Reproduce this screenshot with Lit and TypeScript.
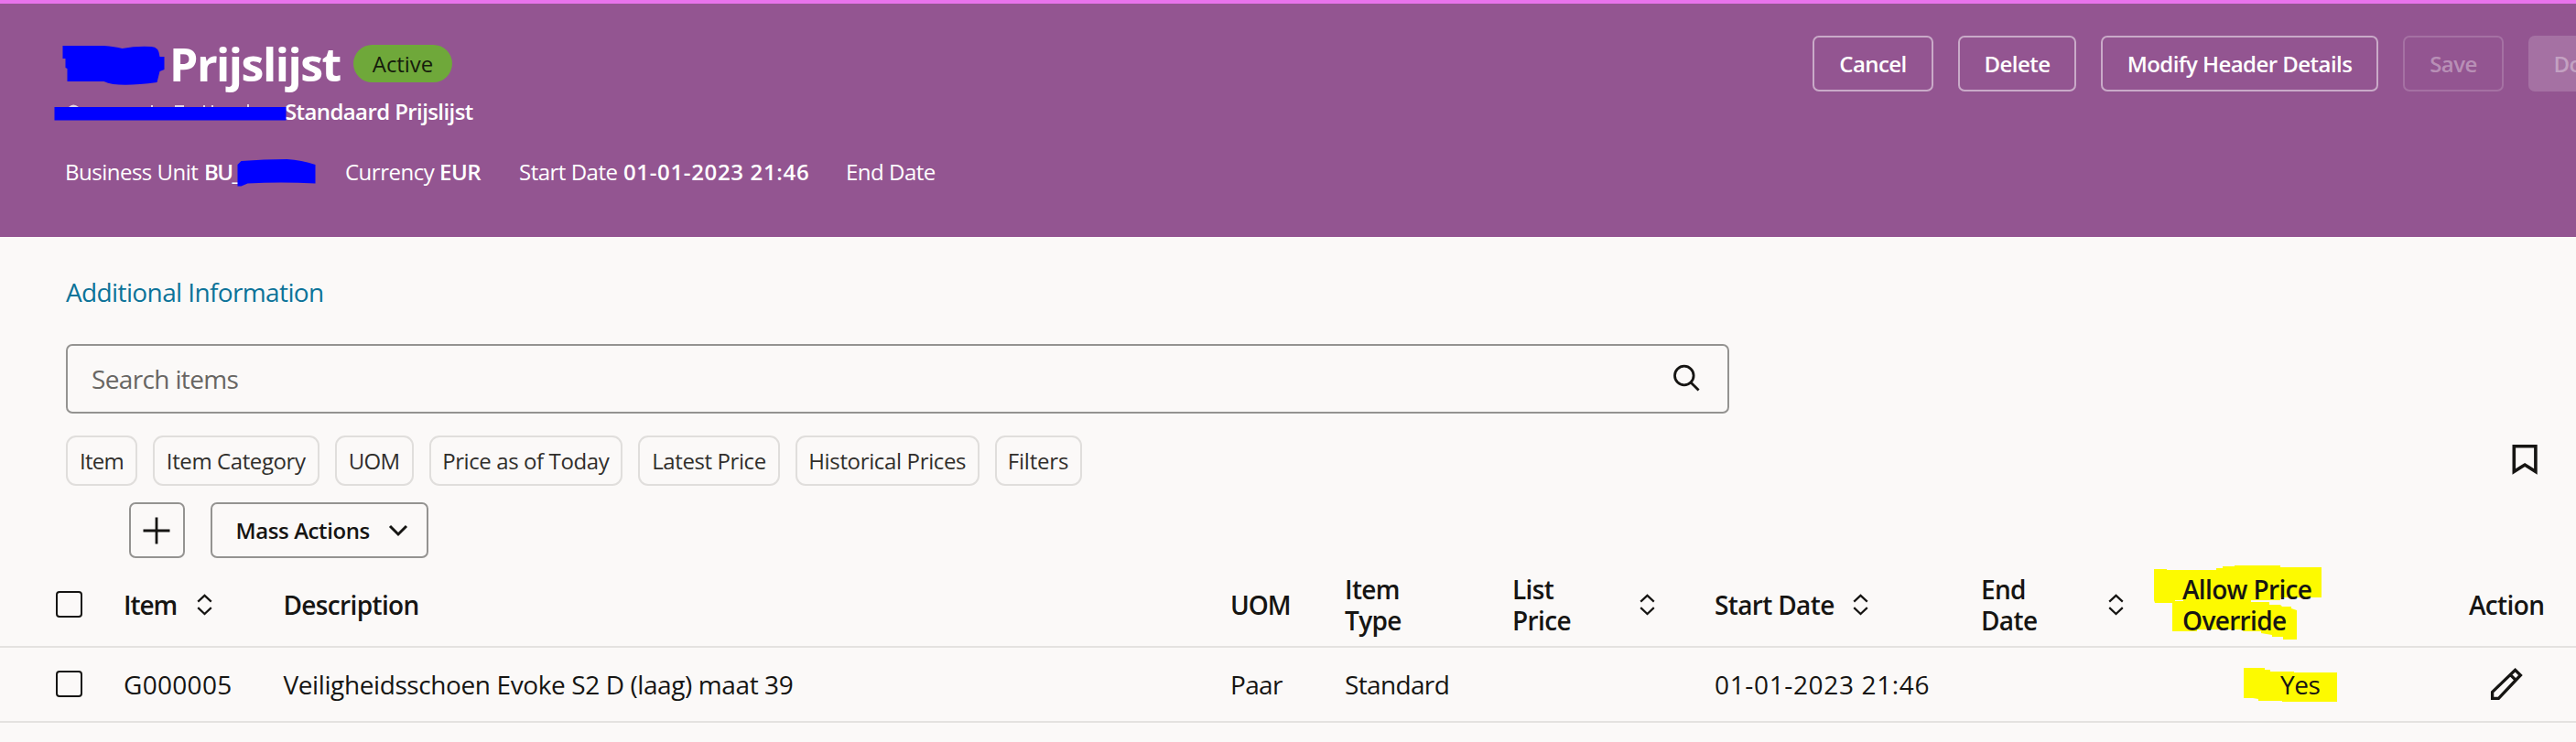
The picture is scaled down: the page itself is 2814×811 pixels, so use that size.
import { LitElement, html, css, svg } from "lit";
import { customElement } from "lit/decorators.js";

const chips: [string, string][] = [
  ["Item", "c1"],
  ["Item Category", "c2"],
  ["UOM", "c3"],
  ["Price as of Today", "c4"],
  ["Latest Price", "c5"],
  ["Historical Prices", "c6"],
  ["Filters", "c7"],
];

const sortIcon = html`<svg class="sort" width="20" height="24" viewBox="0 0 20 24">
  ${svg`<path d="M2 8.5 10 1.2 18 8.5M2 15.5 10 22.8 18 15.5" transform="translate(.4 .8) scale(.91 .93)" fill="none" stroke="#161513" stroke-width="2.5"/>`}
</svg>`;

@customElement("app-root")
export class AppRoot extends LitElement {
  static styles = css`
    :host {
      display: block;
      position: relative;
      width: 100%;
      height: 811px;
      overflow: hidden;
      background: #fbf9f8;
      color: #161513;
      font-family: "Open Sans", "Noto Sans", sans-serif;
      font-size: 28px;
      letter-spacing: -0.5px;
      white-space: nowrap;
    }
    * { box-sizing: border-box; }
    svg { display: block; flex: none; }
    .marks { position: absolute; left: 0; top: 0; pointer-events: none; }
    .page { position: relative; }

    header {
      height: 259px;
      border-top: 4px solid #e873ec;
      background: #935591;
      color: #fff;
      padding: 35px 0 0 71px;
      font-size: 24px;
      letter-spacing: -0.5px;
      overflow: hidden;
    }
    .top { display: flex; justify-content: space-between; height: 61px; }
    .title { display: flex; align-items: center; padding-left: 114px; width: 700px; }
    h1 { margin: 0; width: 201px; font-size: 50px; line-height: 60px; font-weight: 700; letter-spacing: -1.5px; }
    .pill {
      width: 108px; height: 41px; background: #6fa83a; color: #161c0c; margin-bottom: 1px;
      border-radius: 21px; line-height: 41px; text-align: center; letter-spacing: -0.05px;
    }
    .actions { display: flex; gap: 27px; flex: none; width: 834px; }
    .btn {
      height: 61px; flex: none; border: 2px solid rgba(255, 255, 255, 0.5); border-radius: 7px;
      font-weight: 600; line-height: 58px; text-align: center; letter-spacing: -0.55px;
    }
    .cancel { width: 132px; }
    .delete { width: 129px; }
    .modify { width: 303px; }
    .save { width: 110px; border-color: rgba(255, 255, 255, 0.17); color: rgba(255, 255, 255, 0.36); }
    .done { width: 114px; border-color: transparent; background: rgba(255, 255, 255, 0.17); color: rgba(255, 255, 255, 0.36); }
    .sub { padding: 6px 0 0 240px; line-height: 32px; font-weight: 600; letter-spacing: -0.6px; }
    .meta { display: grid; grid-template-columns: 152px 154px 103px 87px 114px 243px auto; padding-top: 34px; line-height: 32px; }
    .meta b { font-weight: 600; }
    .meta .num { letter-spacing: 0.65px; }
    .unit { letter-spacing: -1.6px; }

    .body { padding: 41px 0 0 72px; }
    .link { color: #0c7399; line-height: 38px; letter-spacing: -0.62px; }
    .search {
      display: flex; align-items: center; justify-content: space-between;
      width: 1817px; height: 76px; margin-top: 38px; padding: 0 29px 0 26px;
      border: 2px solid #949391; border-radius: 7px; color: #686663; letter-spacing: -0.65px;
    }
    .filters { display: flex; gap: 17px; margin-top: 24px; padding-right: 41px; align-items: flex-start; }
    .chip {
      height: 55px; border: 2px solid #e0dedc; border-radius: 11px; color: #302e2b;
      font-size: 24px; line-height: 52px; text-align: center; letter-spacing: -0.4px;
    }
    .c1 { width: 78px; letter-spacing: -0.7px; }
    .c2 { width: 181.5px; }
    .c3 { width: 86px; letter-spacing: -0.7px; }
    .c4 { width: 211.5px; }
    .c5 { width: 155px; }
    .c6 { width: 200.5px; letter-spacing: -0.35px; }
    .c7 { width: 95px; letter-spacing: -0.2px; }
    .bookmark { margin: 8px 0 0 auto; }
    .tools { display: flex; gap: 28px; margin-top: 18px; padding-left: 68.5px; }
    .tool {
      display: flex; align-items: center; height: 61px; border: 2px solid #949391; border-radius: 7px;
      font-size: 24px; font-weight: 600; letter-spacing: -0.4px;
    }
    .plus { width: 61px; justify-content: center; }
    .mass { width: 238px; padding-left: 26px; }
    .mass span { width: 166px; }

    .row {
      display: grid; align-items: center;
      grid-template-columns: 74px 174.5px 1034.5px 125px 183px 221px 291px 220px 313px auto;
      padding-left: 61px; border-bottom: 2px solid #e4e2e0;
    }
    .head { height: 98px; padding-top: 6px; font-weight: 600; line-height: 34.5px; letter-spacing: -0.65px; }
    .data { height: 82px; line-height: 38px; }
    .data .num { letter-spacing: 0.65px; }
    .data .code { letter-spacing: 0.3px; }
    .data .std { letter-spacing: -0.65px; }
    .data .desc { letter-spacing: -0.4px; }
    .box { width: 29px; height: 29px; border: 2.6px solid #161513; border-radius: 4px; margin-bottom: 1px; }
    .th { display: flex; align-items: center; }
    .tight { letter-spacing: -1.1px; }
    .w80 { width: 79px; }
    .w139 { width: 138px; }
    .w151 { width: 150px; }
    .yes { padding-left: 107px; }
    .pencil { margin-left: 23px; }
  `;

  render() {
    return html`
      <svg class="marks" width="2814" height="811" viewBox="0 0 2814 811">
        <g fill="#fdfa00">
          <path d="M2353 622h14v1h54v-2h7v-2h13v-1h50v2h45v33h-45v3h-115v3h-22l-1-3z" />
          <path d="M2373 657h12v-1h74v2h20v3h12l2 2h10v2l6 2v32h-15v-3h-12v-2l-12-2v-2h-20v-2h-50v2h-27z" />
          <path d="M2451 730h23v2h6v2h26v1h47v32h-60v-1h-26v-2l-6-1h-10z" />
        </g>
      </svg>
      <div class="page">
        <header>
          <div class="top">
            <div class="title"><h1>Prijslijst</h1><span class="pill">Active</span></div>
            <div class="actions">
              <div class="btn cancel">Cancel</div>
              <div class="btn delete">Delete</div>
              <div class="btn modify">Modify Header Details</div>
              <div class="btn save">Save</div>
              <div class="btn done">Done</div>
            </div>
          </div>
          <div class="sub">Standaard Prijslijst</div>
          <div class="meta">
            <span>Business Unit</span><b class="unit">BU_</b>
            <span>Currency</span><b>EUR</b>
            <span>Start Date</span><b class="num">01-01-2023 21:46</b>
            <span>End Date</span>
          </div>
        </header>
        <div class="body">
          <div class="link">Additional Information</div>
          <div class="search">
            <span>Search items</span>
            <svg width="32" height="32" viewBox="0 0 32 32" fill="none" stroke="#161513" stroke-width="2.8">
              <circle cx="13.8" cy="12.5" r="10.3" /><path d="M21 20l8.6 8.6" />
            </svg>
          </div>
          <div class="filters">
            ${chips.map(([label, size]) => html`<div class="chip ${size}">${label}</div>`)}
            <svg class="bookmark" width="30" height="38" viewBox="0 0 30 38">
              <path d="M3.3 3.8h23.6v27.6L15.1 24 3.3 31.400z" fill="none" stroke="#161513" stroke-width="3.6" />
            </svg>
          </div>
          <div class="tools">
            <div class="tool plus">
              <svg width="30" height="30" viewBox="0 0 30 30"><path d="M15 .5v29M.5 15h29" stroke="#161513" stroke-width="2.8" /></svg>
            </div>
            <div class="tool mass">
              <span>Mass Actions</span>
              <svg width="22" height="14" viewBox="0 0 22 14"><path d="M2 2l9 9 9-9" fill="none" stroke="#161513" stroke-width="3" /></svg>
            </div>
          </div>
        </div>
        <div class="row head">
          <div class="box"></div>
          <div class="th"><span class="w80 tight">Item</span>${sortIcon}</div>
          <div>Description</div>
          <div class="tight">UOM</div>
          <div>Item<br />Type</div>
          <div class="th"><span class="w139">List<br />Price</span>${sortIcon}</div>
          <div class="th"><span class="w151">Start Date</span>${sortIcon}</div>
          <div class="th"><span class="w139">End<br />Date</span>${sortIcon}</div>
          <div>Allow Price<br />Override</div>
          <div>Action</div>
        </div>
        <div class="row data">
          <div class="box"></div>
          <div class="code">G000005</div>
          <div class="desc">Veiligheidsschoen Evoke S2 D (laag) maat 39</div>
          <div class="std">Paar</div>
          <div class="std">Standard</div>
          <div></div>
          <div class="num">01-01-2023 21:46</div>
          <div></div>
          <div class="yes">Yes</div>
          <svg class="pencil" width="36" height="36" viewBox="0 0 36 36" fill="none" stroke="#161513" stroke-width="3.3">
            <path d="M2.600 33.400v-7L27.600 2.400l5.800 5.600L9.400 33.400zM22.400 7.600l6 6" />
          </svg>
        </div>
      </div>
      <svg class="marks" width="2814" height="811" viewBox="0 0 2814 811">
        <g fill="#fff" opacity=".75">
          <path d="M75 117q5-5 11 0zM191 115h10v2h-10zM165 115h2v2h-2zM222 115h2v2h-2zM231 115h2v2h-2zM270 114h2v3h-2z" />
        </g>
        <g fill="#00f">
          <path d="M68.500 50h45q12 1 20 3 16-3 32-2 8 0 9 11h5v14l-5 2-3 12q-30 4-48 2-6-1-10-3h-40V75l-2-1V64h-3z" />
          <path d="M59.500 117h253v14.500h-253z" />
          <path d="M259.500 180l4-4q25-2 50-2 16 1 31 6v20.500q-38-2-74 0l-7 3h-4z" />
        </g>
      </svg>
    `;
  }
}
